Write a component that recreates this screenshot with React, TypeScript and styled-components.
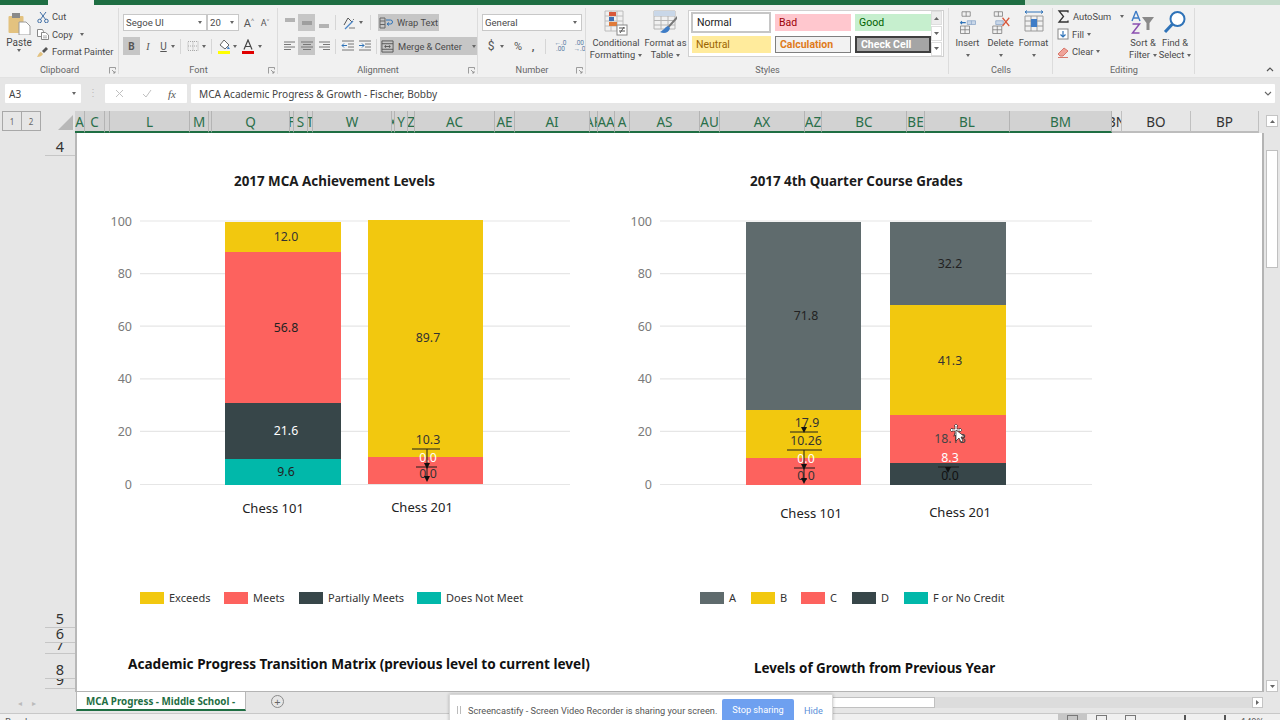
import React from "react";
import styled, { createGlobalStyle } from "styled-components";

const Global = createGlobalStyle`
  html, body { margin: 0; padding: 0; background: #e6e6e6; }
  * { box-sizing: border-box; }
  #root { width: 1280px; height: 720px; overflow: hidden; }
`;

const FONT = `"Noto Sans", "Open Sans", "Liberation Sans", sans-serif`;
const UIFONT = `Roboto, "Noto Sans", "Liberation Sans", sans-serif`;
const GREEN = "#1f6e43";
const YEL = "#f2c80f";
const RED = "#fd625e";
const DARK = "#374649";
const TEAL = "#01b8aa";
const GREY = "#5f6b6d";

const Window = styled.div`
  position: relative;
  width: 1280px;
  height: 720px;
  overflow: hidden;
  display: flex;
  flex-direction: column;
  font-family: ${FONT};
  background: #e6e6e6;
`;

/* ---------- title strip ---------- */
const TitleStrip = styled.div`
  height: 5px;
  flex: none;
  display: flex;
  background: ${GREEN};
`;
const StripGap = styled.div<{ $w: number }>`
  width: ${(p) => p.$w}px;
`;
const StripTab = styled.div`
  width: 46px;
  background: #f1f1f1;
`;
const StripLight = styled.div`
  margin-left: auto;
  width: 255px;
  background: #c5dccc;
`;

/* ---------- ribbon ---------- */
const Ribbon = styled.div`
  height: 73px;
  flex: none;
  display: flex;
  background: #f1f1f1;
  color: #4a4a4a;
  font-family: ${UIFONT};
  font-size: 9.3px;
  border-bottom: 1px solid #e2e2e2;
`;
const Group = styled.div<{ $w: number }>`
  position: relative;
  width: ${(p) => p.$w}px;
  flex: none;
  display: flex;
  flex-direction: column;
  &::after {
    content: "";
    position: absolute;
    right: 0;
    top: 3px;
    bottom: 3px;
    width: 1px;
    background: #dcdcdc;
  }
`;
const GroupBody = styled.div<{ $pl?: number; $pt?: number }>`
  height: 57px;
  flex: none;
  padding: ${(p) => p.$pt ?? 0}px 0 0 ${(p) => p.$pl ?? 0}px;
  display: flex;
`;
const GroupStack = styled.div<{ $pl?: number }>`
  height: 57px;
  flex: none;
  padding: 9px 0 0 ${(p) => p.$pl ?? 0}px;
  display: flex;
  flex-direction: column;
  gap: 6px;
`;
const GroupLabel = styled.div`
  height: 15px;
  line-height: 15px;
  text-align: center;
  font-size: 9.2px;
  color: #666;
`;
const Launcher = styled.svg`
  position: absolute;
  right: 3px;
  bottom: 3px;
  width: 7px;
  height: 7px;
`;
const ToolRow = styled.div<{ $h?: number }>`
  display: flex;
  align-items: center;
  height: ${(p) => p.$h ?? 17}px;
`;
const Tool = styled.div<{ $w?: number; $on?: boolean; $ml?: number }>`
  width: ${(p) => (p.$w ? `${p.$w}px` : "auto")};
  height: 100%;
  margin-left: ${(p) => p.$ml ?? 0}px;
  flex: none;
  display: flex;
  align-items: center;
  justify-content: center;
  gap: 4px;
  background: ${(p) => (p.$on ? "#c6c6c6" : "transparent")};
  color: #4a4a4a;
  white-space: nowrap;
`;
const Caret = styled.span<{ $ml?: number; $mr?: number }>`
  display: inline-block;
  flex: none;
  margin-left: ${(p) => p.$ml ?? 0}px;
  margin-right: ${(p) => p.$mr ?? 0}px;
  border-left: 2.5px solid transparent;
  border-right: 2.5px solid transparent;
  border-top: 3px solid #666;
`;
const Sep = styled.span<{ $ml?: number }>`
  width: 1px;
  height: 15px;
  flex: none;
  margin: 0 ${(p) => p.$ml ?? 4}px;
  background: #d6d6d6;
`;
const PasteCol = styled.div`
  width: 24px;
  margin-left: 7px;
  display: flex;
  flex-direction: column;
  align-items: center;
  padding-top: 7px;
  font-size: 10px;
`;
const PasteLabel = styled.div`
  margin-top: 1px;
  line-height: 13px;
`;
const ClipCol = styled.div`
  margin-left: 6px;
  padding-top: 3px;
  display: flex;
  flex-direction: column;
`;
const ClipRow = styled.div`
  height: 17.5px;
  display: flex;
  align-items: center;
  gap: 3px;
  white-space: nowrap;
`;
const Select = styled.div<{ $w: number }>`
  width: ${(p) => p.$w}px;
  height: 17px;
  flex: none;
  display: flex;
  align-items: center;
  justify-content: space-between;
  padding: 0 4px 0 2px;
  background: #fff;
  border: 1px solid #c8c8c8;
  font-size: 9.6px;
  color: #4a4a4a;
`;
const Glyph = styled.span<{ $w?: number; $b?: boolean; $i?: boolean; $u?: boolean; $s?: number; $f?: string }>`
  display: inline-block;
  text-align: center;
  width: ${(p) => (p.$w ? `${p.$w}px` : "auto")};
  font-weight: ${(p) => (p.$b ? 700 : 400)};
  font-style: ${(p) => (p.$i ? "italic" : "normal")};
  text-decoration: ${(p) => (p.$u ? "underline" : "none")};
  font-size: ${(p) => p.$s ?? 10}px;
  font-family: ${(p) => p.$f ?? "inherit"};
  color: #555;
`;
const DecGlyph = styled.span`
  display: flex;
  flex-direction: column;
  align-items: center;
  font-size: 6.5px;
  line-height: 6.5px;
  color: #5a7da5;
`;
const LargeBtn = styled.div<{ $w: number }>`
  width: ${(p) => p.$w}px;
  flex: none;
  display: flex;
  flex-direction: column;
  align-items: center;
  padding-top: 5px;
  text-align: center;
  line-height: 12px;
`;
const LargeIcon = styled.div`
  height: 26px;
  display: flex;
  align-items: center;
  justify-content: center;
`;
const LargeText = styled.div`
  margin-top: 1px;
  white-space: nowrap;
`;
const CaretLine = styled.div`
  height: 12px;
  display: flex;
  align-items: center;
  justify-content: center;
  gap: 3px;
`;
const Gallery = styled.div`
  margin: 5px 0 0 0;
  width: 256px;
  height: 47px;
  flex: none;
  display: flex;
  background: #fff;
  border: 1px solid #d0d0d0;
`;
const GalleryGrid = styled.div`
  flex: 1;
  display: grid;
  grid-template-columns: 80px 76px 76px;
  grid-template-rows: 21px 17px;
  column-gap: 4px;
  row-gap: 3px;
  padding: 1px 0 0 2px;
`;
const StyleCell = styled.div<{ $bg: string; $c: string; $b?: string; $bold?: boolean; $m?: string }>`
  display: flex;
  align-items: center;
  padding-left: 4px;
  margin: ${(p) => p.$m ?? "0"};
  background: ${(p) => p.$bg};
  color: ${(p) => p.$c};
  border: ${(p) => p.$b ?? "none"};
  font-weight: ${(p) => (p.$bold ? 700 : 400)};
  font-size: 10.5px;
`;
const GalleryScroll = styled.div`
  width: 12px;
  margin: 0 1px 0 0;
  display: flex;
  flex-direction: column;
  gap: 1px;
`;
const GalleryBtn = styled.div<{ $bg?: string }>`
  flex: 1;
  display: flex;
  align-items: center;
  justify-content: center;
  background: ${(p) => p.$bg ?? "#fff"};
  border: 1px solid #dedede;
`;
const Collapse = styled.div`
  flex: 1;
  display: flex;
  align-items: flex-end;
  justify-content: flex-end;
  padding: 0 6px 5px 0;
`;
const EditCol = styled.div`
  margin-left: 4px;
  width: 70px;
  padding-top: 3px;
  display: flex;
  flex-direction: column;
`;

/* ---------- formula bar ---------- */
const FormulaBar = styled.div`
  height: 33px;
  flex: none;
  display: flex;
  align-items: flex-start;
  padding: 6px 5px 0 5px;
  background: #e6e6e6;
`;
const Field = styled.div<{ $w?: number; $ml?: number }>`
  height: 19px;
  width: ${(p) => (p.$w ? `${p.$w}px` : "auto")};
  flex: ${(p) => (p.$w ? "none" : 1)};
  margin-left: ${(p) => p.$ml ?? 0}px;
  background: #fff;
  border-radius: 1px;
  display: flex;
  align-items: center;
  font-size: 10px;
  color: #444;
`;
const NameText = styled.span`
  padding-left: 4px;
  flex: 1;
`;
const FormulaText = styled.span`
  padding-left: 8px;
  flex: 1;
  font-size: 10.1px;
`;
const FxMark = styled.span`
  font-family: "Liberation Serif", serif;
  font-style: italic;
  font-size: 11px;
  color: #555;
`;
const DotsV = styled.div`
  width: 24px;
  height: 19px;
  flex: none;
  text-align: center;
  color: #bbb;
  font-size: 10px;
  line-height: 17px;
`;

/* ---------- column headers ---------- */
const HeaderRow = styled.div`
  height: 22px;
  flex: none;
  display: flex;
  background: #e6e6e6;
`;
const Corner = styled.div`
  width: 75px;
  flex: none;
  display: flex;
  position: relative;
  padding-left: 2px;
`;
const OutlineBtn = styled.div`
  width: 20px;
  height: 20px;
  display: flex;
  align-items: center;
  justify-content: center;
  border: 1px solid #a8a8a8;
  font-size: 8px;
  color: #666;
  margin-right: -1px;
`;
const CornerMark = styled.svg`
  position: absolute;
  left: 58px;
  top: 4px;
  width: 15px;
  height: 15px;
`;
const Col = styled.div<{ $w: number; $sel?: boolean }>`
  width: ${(p) => p.$w}px;
  flex: none;
  height: 22px;
  display: flex;
  align-items: center;
  justify-content: center;
  overflow: hidden;
  white-space: nowrap;
  font-size: 13.5px;
  padding-top: 2px;
  color: ${(p) => (p.$sel ? "#2a6f4a" : "#333")};
  background: ${(p) => (p.$sel ? "#d2d2d2" : "#e6e6e6")};
  border-right: 1px solid ${(p) => (p.$sel ? "#b4b4b4" : "#c0c0c0")};
  border-bottom: 2px solid ${(p) => (p.$sel ? GREEN : "#bdbdbd")};
`;
const ScrollBtn = styled.div<{ $ml?: number; $mt?: number }>`
  width: 12px;
  height: 12px;
  flex: none;
  margin: ${(p) => p.$mt ?? 0}px 0 0 ${(p) => p.$ml ?? 0}px;
  display: flex;
  align-items: center;
  justify-content: center;
  background: #fff;
  border: 1px solid #c4c4c4;
`;

/* ---------- main ---------- */
const Main = styled.div`
  height: 559px;
  flex: none;
  display: flex;
  overflow: hidden;
`;
const Gutter = styled.div`
  width: 75px;
  flex: none;
  display: flex;
  flex-direction: column;
  align-items: flex-end;
`;
const RowHead = styled.div<{ $h: number }>`
  width: 30px;
  height: ${(p) => p.$h}px;
  flex: none;
  overflow: hidden;
  display: flex;
  align-items: flex-end;
  justify-content: center;
  border-bottom: 1px solid #c6c6c6;
  font-size: 14.5px;
  line-height: 18px;
  color: #333;
`;
const Sheet = styled.div`
  width: 1189px;
  flex: none;
  background: #fff;
  border-left: 2px solid #b8b8b8;
  border-right: 2px solid #b4b4b4;
  border-bottom: 1px solid #b4b4b4;
  display: grid;
  grid-template-columns: 523px 512px;
  align-content: start;
  color: #111;
`;
const ChartCard = styled.div`
  display: flex;
  flex-direction: column;
`;
const ChartTitle = styled.div<{ $pl: number }>`
  height: 67px;
  padding: 40px 0 0 ${(p) => p.$pl}px;
  font-weight: 700;
  font-size: 13.4px;
  line-height: 17px;
  color: #1c1c1c;
  white-space: nowrap;
`;
const ChartSvg = styled.svg`
  display: block;
  flex: none;
`;
const AxisText = styled.text`
  font-family: ${FONT};
  font-size: 12.5px;
  fill: #7a7a7a;
  text-anchor: end;
  dominant-baseline: central;
`;
const ValueText = styled.text`
  font-family: ${FONT};
  font-size: 12.3px;
  text-anchor: middle;
  dominant-baseline: central;
`;
const CatText = styled.text`
  font-family: ${FONT};
  font-size: 13px;
  fill: #222;
  text-anchor: middle;
  dominant-baseline: central;
`;
const Legend = styled.div<{ $pl: number }>`
  height: 14px;
  margin-top: 60px;
  padding-left: ${(p) => p.$pl}px;
  display: flex;
  align-items: center;
  font-size: 11px;
  color: #333;
  white-space: nowrap;
`;
const LegendItem = styled.div<{ $w: number }>`
  width: ${(p) => p.$w}px;
  flex: none;
  display: flex;
  align-items: center;
  gap: 5px;
`;
const Swatch = styled.span<{ $c: string }>`
  width: 24px;
  height: 12px;
  flex: none;
  margin-top: 2px;
  background: ${(p) => p.$c};
`;
const Heading = styled.div<{ $pl: number; $mt: number; $s: number }>`
  margin-top: ${(p) => p.$mt}px;
  padding-left: ${(p) => p.$pl}px;
  font-weight: 700;
  font-size: ${(p) => p.$s}px;
  line-height: 18px;
  color: #111;
  white-space: nowrap;
`;
const VScroll = styled.div`
  flex: 1;
  display: flex;
  flex-direction: column;
  align-items: center;
  padding: 17px 0 0 0;
  background: #e6e6e6;
`;
const VThumb = styled.div`
  width: 12px;
  height: 118px;
  flex: none;
  background: #fff;
  border: 1px solid #c0c0c0;
`;
const VTrack = styled.div`
  flex: 1;
`;

/* ---------- bottom ---------- */
const TabBar = styled.div`
  height: 21px;
  flex: none;
  display: flex;
  background: #e6e6e6;
`;
const SheetNav = styled.div`
  width: 76px;
  flex: none;
  display: flex;
  align-items: center;
  gap: 10px;
  padding-left: 18px;
  color: #bbb;
  font-size: 8px;
`;
const SheetTab = styled.div`
  width: 170px;
  flex: none;
  height: 19px;
  padding: 1px 0 0 9px;
  display: flex;
  align-items: center;
  background: #fff;
  border-left: 1px solid #b8b8b8;
  border-right: 1px solid #b8b8b8;
  border-bottom: 2px solid ${GREEN};
  color: ${GREEN};
  font-weight: 700;
  font-size: 9.8px;
  white-space: nowrap;
`;
const AddSheet = styled.div`
  width: 13px;
  height: 13px;
  margin: 3px 0 0 25px;
  flex: none;
  display: flex;
  align-items: center;
  justify-content: center;
  border: 1px solid #8a8a8a;
  border-radius: 50%;
  color: #666;
  font-size: 11px;
  line-height: 11px;
`;
const HScroll = styled.div`
  flex: none;
  margin: 5px 0 0 auto;
  height: 11px;
  display: flex;
  width: 664px;
  background: #dcdcdc;
`;
const HThumb = styled.div`
  width: 336px;
  flex: none;
  background: #fff;
  border: 1px solid #c0c0c0;
`;
const HTrackEnd = styled.div`
  flex: 1;
`;
const HBtn = styled.div`
  width: 11px;
  flex: none;
  display: flex;
  align-items: center;
  justify-content: center;
  background: #fff;
  border: 1px solid #c4c4c4;
`;
const TabEndGap = styled.div`
  width: 17px;
  flex: none;
`;
const StatusBar = styled.div`
  flex: 1;
  display: flex;
  align-items: flex-start;
  background: #f0f0f0;
  border-top: 1px solid #c8c8c8;
  overflow: hidden;
  font-size: 9.5px;
  color: #555;
`;
const ReadyText = styled.div`
  padding: 1px 0 0 5px;
  width: 1058px;
  flex: none;
`;
const ViewBtn = styled.div<{ $on?: boolean }>`
  width: 29px;
  height: 8px;
  flex: none;
  display: flex;
  justify-content: center;
  padding-top: 1px;
  background: ${(p) => (p.$on ? "#c6c6c6" : "transparent")};
`;
const ViewBox = styled.span`
  width: 11px;
  height: 10px;
  border: 1px solid #777;
`;
const ZoomArea = styled.div`
  flex: 1;
  display: flex;
  padding-top: 1px;
`;
const ZoomTick = styled.span<{ $ml: number }>`
  width: 2px;
  height: 8px;
  margin-left: ${(p) => p.$ml}px;
  background: #555;
`;
const ZoomText = styled.span`
  margin-left: 15px;
  font-size: 9px;
`;
const Share = styled.div`
  position: absolute;
  left: 449px;
  top: 694px;
  width: 384px;
  height: 30px;
  display: flex;
  align-items: flex-start;
  background: #fff;
  border: 1px solid #d8d8d8;
  box-shadow: 0 0 3px rgba(0, 0, 0, 0.25);
  font-family: ${UIFONT};
  font-size: 9.2px;
  color: #555;
  white-space: nowrap;
`;
const ShareGrip = styled.span`
  margin: 11px 0 0 7px;
  width: 4px;
  height: 8px;
  flex: none;
  border-left: 1px solid #bbb;
  border-right: 1px solid #bbb;
`;
const ShareText = styled.span`
  margin: 10px 0 0 7px;
  width: 254px;
  flex: none;
`;
const StopBtn = styled.div`
  width: 72px;
  height: 26px;
  margin-top: 4px;
  flex: none;
  padding-top: 5px;
  text-align: center;
  background: #6ea0f0;
  color: #fff;
  border-radius: 2px 2px 0 0;
`;
const HideLink = styled.span`
  margin: 10px 0 0 10px;
  color: #5b8fd8;
`;

/* ---------- icons ---------- */
type IP = { w: number; h?: number; children: React.ReactNode; vb?: string };
const I = ({ w, h, children, vb }: IP) => (
  <svg width={w} height={h ?? w} viewBox={vb ?? `0 0 ${w} ${h ?? w}`} fill="none" style={{ flex: "none" }}>
    {children}
  </svg>
);
const LauncherIcon = () => (
  <Launcher viewBox="0 0 7 7" fill="none">
    <path d="M.5 6.5v-6h6v2M3 3l3 3M6 4v2H4" stroke="#888" strokeWidth="0.8" />
  </Launcher>
);
const PasteIcon = () => (
  <I w={23} h={23}>
    <rect x="0.5" y="4" width="15" height="17" rx="1" fill="#e3c27f" />
    <rect x="4" y="1" width="8" height="5" fill="#8a8a8a" />
    <path d="M11 10h7l4 4v9H11z" fill="#fff" stroke="#9a9a9a" />
  </I>
);
const ScissorsIcon = () => (
  <I w={12}>
    <path d="M3 1l6 8M9 1L3 9" stroke="#3f6ea5" strokeWidth="1" />
    <circle cx="2.6" cy="10" r="1.8" stroke="#3f6ea5" />
    <circle cx="9.4" cy="10" r="1.8" stroke="#3f6ea5" />
  </I>
);
const CopyIcon = () => (
  <I w={12}>
    <path d="M.5 1.5h5l1 2v5h-6z" fill="#fff" stroke="#888" />
    <path d="M4.5 4.5h4l3 2.5v4.5h-7z" fill="#fff" stroke="#888" />
    <path d="M6 8h4M6 9.8h4" stroke="#aaa" />
  </I>
);
const BrushIcon = () => (
  <I w={12}>
    <path d="M0 11c2-4 3-5 4-5l2 2c-1 2-3 3-6 3z" fill="#e3c27f" />
    <path d="M5 5l4-4 2 2-4 4z" fill="#555" />
  </I>
);
const Lines = ({ rows }: { rows: [number, number, number][] }) => (
  <I w={14}>
    {rows.map(([x1, x2, y], i) => (
      <path key={i} d={`M${x1} ${y}H${x2}`} stroke="#777" />
    ))}
  </I>
);
const BordersIcon = () => (
  <I w={12}>
    <path d="M1 1.5h10v9H1zM6 1.5v9M1 6h10" stroke="#aaa" strokeDasharray="1 1" />
  </I>
);
const FillIcon = () => (
  <I w={14} h={15}>
    <path d="M7 1l5 5-4 4-5-4z" fill="#fff" stroke="#666" />
    <path d="M11 7l2 3H10z" fill="#4d86c6" />
    <rect x="1" y="12" width="12" height="3" fill="#ffff00" />
  </I>
);
const FontColorIcon = () => (
  <I w={14} h={15}>
    <path d="M3 10.5L7 1l4 9.5M4.6 7.5h4.8" stroke="#444" strokeWidth="1.2" />
    <rect x="1" y="12" width="12" height="3" fill="#e00000" />
  </I>
);
const OrientIcon = () => (
  <I w={14}>
    <path d="M2 9l4-7 4 4" stroke="#555" />
    <path d="M3 13l8-8" stroke="#4d86c6" strokeWidth="1.2" />
    <path d="M11 4l1-1M7 12h6" stroke="#777" />
  </I>
);
const IndentIcon = ({ dir }: { dir: number }) => (
  <I w={14}>
    <path d="M1 2h12M7 5h6M7 8h6M1 11h12" stroke="#777" />
    <path d={dir < 0 ? "M1 6.5h5M3 4.5l-2 2 2 2" : "M1 6.5h5M4 4.5l2 2-2 2"} stroke="#2f73b8" />
  </I>
);
const WrapIcon = () => (
  <I w={14}>
    <path d="M1 2h5v10H1zM1 5h5M1 8.5h5" stroke="#666" />
    <path d="M7 4h4.5a1.5 1.5 0 010 4H8.5M10 6.5L8 8l2 1.5" stroke="#2f73b8" />
  </I>
);
const MergeIcon = () => (
  <I w={13} vb="0 0 14 14">
    <path d="M1 1h12v12H1zM1 4h12M1 10h12M4 7h6M4 7l1.5-1.4M4 7l1.5 1.4M10 7L8.5 5.6M10 7L8.5 8.4" stroke="#555" />
  </I>
);
const CondIcon = () => (
  <I w={24} h={26}>
    <path d="M1 1h18v20H1zM1 6h18M1 11h18M1 16h18M7 1v20M13 1v20" stroke="#bcbcbc" />
    <rect x="5" y="2" width="7" height="4" fill="#d8583b" />
    <rect x="5" y="7" width="5" height="4" fill="#3e6fb3" />
    <rect x="5" y="12" width="8" height="4" fill="#e07b3a" />
    <rect x="13" y="15" width="10" height="10" fill="#fff" stroke="#888" />
    <path d="M15 18h6M15 21h6M20 17l-4 6" stroke="#555" />
  </I>
);
const TableFmtIcon = () => (
  <I w={26} h={26}>
    <path d="M1 1h21v18H1zM1 6h21M1 10.5h21M1 15h21M8 1v18M15 1v18" stroke="#b4b4b4" />
    <rect x="1" y="1" width="21" height="5" fill="#c9d7e8" />
    <path d="M24 6l-9 10c-2 2-1 3 0 3l9-10z" fill="#777" />
    <path d="M15 16c-3 1-4 4-8 6 4 2 9 1 10-4z" fill="#3e7cc6" />
  </I>
);
const CellGrid = () => <path d="M3 1h11v6H3zM8.5 1v6M1 20h12v10H1zM7 20v10M1 25h12" stroke="#777" />;
const InsertIcon = () => (
  <I w={22} h={24} vb="0 0 22 32">
    <CellGrid />
    <path d="M10 13h11v5H10zM15.5 13v5" stroke="#8aa5c8" fill="#c9d7e8" />
    <path d="M1 15.5h7M3 13.5l-2 2 2 2" stroke="#2f73b8" strokeWidth="1.4" />
  </I>
);
const DeleteIcon = () => (
  <I w={24} vb="0 0 24 32" h={24}>
    <CellGrid />
    <path d="M5 13h10v5H5z" fill="#c9d7e8" stroke="#8aa5c8" />
    <path d="M14 9l9 11M23 9l-9 11" stroke="#d8583b" strokeWidth="1.6" />
  </I>
);
const FormatIcon = () => (
  <I w={22} h={26}>
    <path d="M2 6h18v15H2zM8 6v15M14 6v15M2 11h18M2 16h18" stroke="#9a9a9a" />
    <rect x="8" y="9" width="6" height="8" fill="#3e7cc6" />
    <path d="M2 2h18M2 2l2-1.5M2 2l2 1.5M20 2l-2-1.5M20 2l-2 1.5" stroke="#2f73b8" />
  </I>
);
const SigmaIcon = () => (
  <I w={13}>
    <path d="M11 2.5V1H2l4.5 5.5L2 12h9v-1.5" stroke="#333" strokeWidth="1.3" />
  </I>
);
const FillDownIcon = () => (
  <I w={12}>
    <rect x="1" y="1" width="10" height="10" fill="#fff" stroke="#888" />
    <path d="M6 3v6M3.5 6.5L6 9l2.5-2.5" stroke="#2f73b8" strokeWidth="1.2" />
  </I>
);
const EraserIcon = () => (
  <I w={12}>
    <path d="M1 8l6-6 4 3-5 5H3z" fill="#f0a49a" stroke="#d8786c" />
    <path d="M1 11.5h10" stroke="#d8786c" />
  </I>
);
const SortIcon = () => (
  <I w={24} h={26}>
    <path d="M5 1L1 11M5 1l4 10M2.5 8h5" stroke="#3e7cc6" strokeWidth="1.4" />
    <path d="M1.5 14h7l-7 9h7" stroke="#8b4fb0" strokeWidth="1.5" />
    <path d="M11 7h12l-4.5 6v7h-3v-7z" fill="#8a8a8a" />
  </I>
);
const FindIcon = () => (
  <I w={24} h={26}>
    <circle cx="14.5" cy="9" r="7" stroke="#2f73b8" strokeWidth="2" fill="#fff" />
    <path d="M9.5 14L2 22" stroke="#2f73b8" strokeWidth="3" />
  </I>
);
const Tri = ({ d }: { d: "up" | "down" | "right" }) => (
  <I w={7}>
    <path d={d === "up" ? "M1 5h5L3.5 2z" : d === "down" ? "M1 2h5L3.5 5z" : "M2 1v5l3-2.5z"} fill="#666" />
  </I>
);

/* ---------- data ---------- */
const cols: [string, number, boolean?][] = [
  ["A", 10, true], ["C", 20, true], ["", 5, true], ["L", 80, true], ["M", 19, true], ["", 3, true], ["Q", 78, true],
  ["F", 4, true], ["S", 14, true], ["T", 5, true], ["W", 79, true], ["X", 3, true], ["Y", 13, true], ["Z", 7, true],
  ["AC", 80, true], ["AE", 20, true], ["AI", 75, true], ["AK", 8, true], ["AA", 17, true], ["A", 15, true],
  ["AS", 70, true], ["AU", 20, true], ["AX", 85, true], ["AZ", 17, true], ["BC", 85, true], ["BE", 18, true],
  ["BL", 85, true], ["BM", 102, true], ["BN", 10], ["BO", 69], ["BP", 68],
];
type Seg = [number, number, string];
type Lab = [number, number, string, string];
type Line = [number, number, number, number];
type ChartDef = {
  x: number;
  w: number;
  gridX: [number, number];
  axisX: number;
  bars: { x: number; w: number; segs: Seg[] }[];
  labels: Lab[];
  lines: Line[];
  arrows: [number, number][];
  cats: [number, number, string][];
};
const chart1: ChartDef = {
  x: 77,
  w: 523,
  gridX: [140, 570],
  axisX: 132,
  bars: [
    { x: 225, w: 116, segs: [[222, 252, YEL], [252, 403, RED], [403, 459, DARK], [459, 485, TEAL]] },
    { x: 368, w: 115, segs: [[220, 457, YEL], [457, 484, RED]] },
  ],
  labels: [
    [286, 236, "12.0", "#333"], [286, 327, "56.8", "#222"], [286, 430, "21.6", "#fff"], [286, 471, "9.6", "#222"],
    [428, 337, "89.7", "#333"], [428, 439, "10.3", "#333"], [428, 457, "0.0", "#fff"], [428, 473, "0.0", "#333"],
  ],
  lines: [[412, 449, 440, 449], [427, 449, 427, 464], [416, 467, 437, 467], [427, 467, 427, 477]],
  arrows: [[427, 463], [427, 476]],
  cats: [[273, 508, "Chess 101"], [422, 507, "Chess 201"]],
};
const chart2: ChartDef = {
  x: 600,
  w: 512,
  gridX: [660, 1092],
  axisX: 652,
  bars: [
    { x: 746, w: 115, segs: [[222, 410, GREY], [410, 458, YEL], [458, 485, RED]] },
    { x: 890, w: 116, segs: [[222, 305, GREY], [305, 415, YEL], [415, 463, RED], [463, 485, DARK]] },
  ],
  labels: [
    [806, 315, "71.8", "#222"], [950, 263, "32.2", "#222"], [950, 360, "41.3", "#333"], [807, 422, "17.9", "#333"],
    [806, 440, "10.26", "#333"], [806, 458, "0.0", "#fff"], [806, 475, "0.0", "#333"], [950, 438, "18.18", "#444"],
    [950, 457, "8.3", "#fff"], [950, 475, "0.0", "#111"],
  ],
  lines: [
    [790, 432, 818, 432], [787, 450, 822, 450], [804, 450, 804, 465], [794, 468, 815, 468], [804, 468, 804, 479], [938, 467, 959, 467],
  ],
  arrows: [[804, 427], [804, 464], [804, 478], [948, 467]],
  cats: [[811, 513, "Chess 101"], [960, 512, "Chess 201"]],
};

const Chart = ({ def, children }: { def: ChartDef; children?: React.ReactNode }) => (
  <ChartSvg width={def.w} height={330} viewBox={`${def.x} 200 ${def.w} 330`}>
    {[221, 273.6, 326.2, 378.8, 431.4, 484.5].map((y, i) => (
      <g key={y}>
        <path d={`M${def.gridX[0]} ${y}H${def.gridX[1]}`} stroke="#e6e6e6" strokeWidth="1.2" />
        <AxisText x={def.axisX} y={y}>{100 - i * 20}</AxisText>
      </g>
    ))}
    {def.bars.map((b) =>
      b.segs.map(([y1, y2, fill]) => <rect key={`${b.x}-${y1}`} x={b.x} y={y1} width={b.w} height={y2 - y1} fill={fill} />),
    )}
    {def.labels.map(([x, y, t, c]) => (
      <ValueText key={`${x}-${y}`} x={x} y={y} fill={c}>{t}</ValueText>
    ))}
    {def.lines.map(([a, b, c, d]) => (
      <path key={`${a}-${b}-${c}`} d={`M${a} ${b}L${c} ${d}`} stroke="#1c1c1c" strokeWidth="1" />
    ))}
    {def.arrows.map(([x, y]) => (
      <path key={`${x}-${y}`} d={`M${x - 3} ${y}h6l-3 6z`} fill="#111" />
    ))}
    {def.cats.map(([x, y, t]) => (
      <CatText key={t} x={x} y={y}>{t}</CatText>
    ))}
    {children}
  </ChartSvg>
);

export default function App() {
  return (
    <Window>
      <Global />
      <TitleStrip>
        <StripGap $w={48} />
        <StripTab />
        <StripLight />
      </TitleStrip>

      <Ribbon>
        <Group $w={119}>
          <GroupBody>
            <PasteCol>
              <PasteIcon />
              <PasteLabel>Paste</PasteLabel>
              <Caret />
            </PasteCol>
            <ClipCol>
              <ClipRow><ScissorsIcon />Cut</ClipRow>
              <ClipRow><CopyIcon />Copy<Caret $ml={4} /></ClipRow>
              <ClipRow><BrushIcon />Format Painter</ClipRow>
            </ClipCol>
          </GroupBody>
          <GroupLabel>Clipboard</GroupLabel>
          <LauncherIcon />
        </Group>

        <Group $w={159}>
          <GroupStack $pl={4}>
            <ToolRow>
              <Select $w={84}>Segoe UI<Caret /></Select>
              <Select $w={32}>20<Caret /></Select>
              <Tool $w={16} $ml={2}><Glyph $s={11}>A˄</Glyph></Tool>
              <Tool $w={16}><Glyph $s={9}>A˅</Glyph></Tool>
            </ToolRow>
            <ToolRow $h={18}>
              <Tool $w={17} $on><Glyph $b>B</Glyph></Tool>
              <Tool $w={16}><Glyph $i $f={'"Liberation Serif", serif'}>I</Glyph></Tool>
              <Tool $w={15}><Glyph $u>U</Glyph></Tool>
              <Caret />
              <Sep $ml={5} />
              <Tool $w={14}><BordersIcon /></Tool>
              <Caret $ml={2} />
              <Sep $ml={5} />
              <Tool><FillIcon /></Tool>
              <Caret $ml={2} />
              <Tool $ml={4}><FontColorIcon /></Tool>
              <Caret $ml={3} />
            </ToolRow>
          </GroupStack>
          <GroupLabel>Font</GroupLabel>
          <LauncherIcon />
        </Group>

        <Group $w={200}>
          <GroupStack $pl={4}>
            <ToolRow>
              <Tool $w={16}><Lines rows={[[2, 12, 3], [2, 12, 5]]} /></Tool>
              <Tool $w={17} $on><Lines rows={[[2, 12, 6], [2, 12, 8]]} /></Tool>
              <Tool $w={17}><Lines rows={[[2, 12, 9], [2, 12, 11]]} /></Tool>
              <Sep $ml={3} />
              <Tool $w={20}><OrientIcon /></Tool>
              <Caret />
              <Sep $ml={7} />
              <Tool $w={61} $on><WrapIcon />Wrap Text</Tool>
            </ToolRow>
            <ToolRow $h={18}>
              <Tool $w={16}><Lines rows={[[1, 12, 3], [1, 8, 5.5], [1, 12, 8], [1, 8, 10.5]]} /></Tool>
              <Tool $w={17} $on><Lines rows={[[1, 13, 3], [3, 11, 5.5], [1, 13, 8], [3, 11, 10.5]]} /></Tool>
              <Tool $w={17}><Lines rows={[[2, 13, 3], [6, 13, 5.5], [2, 13, 8], [6, 13, 10.5]]} /></Tool>
              <Sep $ml={3} />
              <Tool $w={17}><IndentIcon dir={-1} /></Tool>
              <Tool $w={17}><IndentIcon dir={1} /></Tool>
              <Sep $ml={3} />
              <Tool $w={97} $on><MergeIcon />Merge &amp; Center<Caret $ml={6} /></Tool>
            </ToolRow>
          </GroupStack>
          <GroupLabel>Alignment</GroupLabel>
          <LauncherIcon />
        </Group>

        <Group $w={108}>
          <GroupStack $pl={4}>
            <ToolRow><Select $w={100}>General<Caret /></Select></ToolRow>
            <ToolRow $h={18}>
              <Tool $w={18}><Glyph $s={12}>$</Glyph></Tool>
              <Caret />
              <Tool $w={18} $ml={5}><Glyph $s={11}>%</Glyph></Tool>
              <Tool $w={12}><Glyph $b $s={11}>,</Glyph></Tool>
              <Sep $ml={6} />
              <Tool $w={17}><DecGlyph><span>←.0</span><span>.00</span></DecGlyph></Tool>
              <Tool $w={17} $ml={2}><DecGlyph><span>.00</span><span>→.0</span></DecGlyph></Tool>
            </ToolRow>
          </GroupStack>
          <GroupLabel>Number</GroupLabel>
          <LauncherIcon />
        </Group>

        <Group $w={363}>
          <GroupBody $pl={3}>
            <LargeBtn $w={54}>
              <LargeIcon><CondIcon /></LargeIcon>
              <LargeText>Conditional</LargeText>
              <CaretLine>Formatting<Caret /></CaretLine>
            </LargeBtn>
            <LargeBtn $w={45}>
              <LargeIcon><TableFmtIcon /></LargeIcon>
              <LargeText>Format as</LargeText>
              <CaretLine>Table<Caret /></CaretLine>
            </LargeBtn>
            <Gallery>
              <GalleryGrid>
                <StyleCell $bg="#fff" $c="#222" $b="2px solid #c6c6c6">Normal</StyleCell>
                <StyleCell $bg="#ffc7ce" $c="#9c0006" $m="2px 0">Bad</StyleCell>
                <StyleCell $bg="#c6efce" $c="#006100" $m="2px 0">Good</StyleCell>
                <StyleCell $bg="#ffeb9c" $c="#9c6500" $m="0 0 0 1px">Neutral</StyleCell>
                <StyleCell $bg="#f2f2f2" $c="#e07b1a" $b="1px solid #7f7f7f" $bold>Calculation</StyleCell>
                <StyleCell $bg="#a5a5a5" $c="#fff" $b="2px solid #3f3f3f" $bold>Check Cell</StyleCell>
              </GalleryGrid>
              <GalleryScroll>
                <GalleryBtn $bg="#ececec"><Tri d="up" /></GalleryBtn>
                <GalleryBtn><Tri d="down" /></GalleryBtn>
                <GalleryBtn><Tri d="down" /></GalleryBtn>
              </GalleryScroll>
            </Gallery>
          </GroupBody>
          <GroupLabel>Styles</GroupLabel>
        </Group>

        <Group $w={104}>
          <GroupBody $pl={2}>
            <LargeBtn $w={33}>
              <LargeIcon><InsertIcon /></LargeIcon>
              <LargeText>Insert</LargeText>
              <CaretLine><Caret /></CaretLine>
            </LargeBtn>
            <LargeBtn $w={33}>
              <LargeIcon><DeleteIcon /></LargeIcon>
              <LargeText>Delete</LargeText>
              <CaretLine><Caret /></CaretLine>
            </LargeBtn>
            <LargeBtn $w={33}>
              <LargeIcon><FormatIcon /></LargeIcon>
              <LargeText>Format</LargeText>
              <CaretLine><Caret /></CaretLine>
            </LargeBtn>
          </GroupBody>
          <GroupLabel>Cells</GroupLabel>
        </Group>

        <Group $w={142}>
          <GroupBody>
            <EditCol>
              <ClipRow><SigmaIcon />AutoSum<Caret $ml={6} /></ClipRow>
              <ClipRow><FillDownIcon />Fill<Caret /></ClipRow>
              <ClipRow><EraserIcon />Clear<Caret /></ClipRow>
            </EditCol>
            <LargeBtn $w={32}>
              <LargeIcon><SortIcon /></LargeIcon>
              <LargeText>Sort &amp;</LargeText>
              <CaretLine>Filter<Caret /></CaretLine>
            </LargeBtn>
            <LargeBtn $w={32}>
              <LargeIcon><FindIcon /></LargeIcon>
              <LargeText>Find &amp;</LargeText>
              <CaretLine>Select<Caret /></CaretLine>
            </LargeBtn>
          </GroupBody>
          <GroupLabel>Editing</GroupLabel>
        </Group>

        <Collapse>
          <I w={8} h={6}><path d="M1 5l3-3 3 3" stroke="#555" strokeWidth="1.2" /></I>
        </Collapse>
      </Ribbon>

      <FormulaBar>
        <Field $w={76}><NameText>A3</NameText><Caret $mr={5} /></Field>
        <DotsV>⋮</DotsV>
        <Field $w={82}>
          <Tool $w={28}><I w={9}><path d="M1 1l7 7M8 1L1 8" stroke="#c0c0c0" /></I></Tool>
          <Tool $w={28}><I w={10}><path d="M1 5l3 3 5-7" stroke="#c0c0c0" /></I></Tool>
          <Tool $w={22}><FxMark>fx</FxMark></Tool>
        </Field>
        <Field $ml={4}>
          <FormulaText>MCA Academic Progress &amp; Growth - Fischer, Bobby</FormulaText>
          <Tool $w={14}><I w={8} h={6}><path d="M1 1l3 3 3-3" stroke="#666" strokeWidth="1.1" /></I></Tool>
        </Field>
      </FormulaBar>

      <HeaderRow>
        <Corner>
          <OutlineBtn>1</OutlineBtn>
          <OutlineBtn>2</OutlineBtn>
          <CornerMark viewBox="0 0 15 15"><path d="M15 0v15H0z" fill="#b8b8b8" /></CornerMark>
        </Corner>
        {cols.map(([t, w, sel], i) => (
          <Col key={i} $w={w} $sel={sel}>{t}</Col>
        ))}
        <ScrollBtn $ml={7} $mt={4}><Tri d="up" /></ScrollBtn>
      </HeaderRow>

      <Main>
        <Gutter>
          <RowHead $h={23}>4</RowHead>
          <RowHead $h={472}>5</RowHead>
          <RowHead $h={15}>6</RowHead>
          <RowHead $h={11}>7</RowHead>
          <RowHead $h={25}>8</RowHead>
          <RowHead $h={10}>9</RowHead>
        </Gutter>
        <Sheet>
          <ChartCard>
            <ChartTitle $pl={157}>2017 MCA Achievement Levels</ChartTitle>
            <Chart def={chart1} />
            <Legend $pl={63}>
              <LegendItem $w={84}><Swatch $c={YEL} />Exceeds</LegendItem>
              <LegendItem $w={75}><Swatch $c={RED} />Meets</LegendItem>
              <LegendItem $w={118}><Swatch $c={DARK} />Partially Meets</LegendItem>
              <LegendItem $w={110}><Swatch $c={TEAL} />Does Not Meet</LegendItem>
            </Legend>
            <Heading $pl={51} $mt={51} $s={13.6}>Academic Progress Transition Matrix (previous level to current level)</Heading>
          </ChartCard>
          <ChartCard>
            <ChartTitle $pl={150}>2017 4th Quarter Course Grades</ChartTitle>
            <Chart def={chart2}>
              <g transform="translate(950 424)">
                <path d="M6 0l2 2H7v3h3V4l2 2-2 2V7H7v3h1l-2 2-2-2h1V7H2v1L0 6l2-2v1h3V2H4z" fill="#fff" stroke="#222" strokeWidth="0.6" />
                <path d="M6 6v11l3-3 2 4 2-1-2-4h4z" fill="#fff" stroke="#222" strokeWidth="0.7" />
              </g>
            </Chart>
            <Legend $pl={100}>
              <LegendItem $w={51}><Swatch $c={GREY} />A</LegendItem>
              <LegendItem $w={50}><Swatch $c={YEL} />B</LegendItem>
              <LegendItem $w={51}><Swatch $c={RED} />C</LegendItem>
              <LegendItem $w={52}><Swatch $c={DARK} />D</LegendItem>
              <LegendItem $w={110}><Swatch $c={TEAL} />F or No Credit</LegendItem>
            </Legend>
            <Heading $pl={154} $mt={55} $s={13.4}>Levels of Growth from Previous Year</Heading>
          </ChartCard>
        </Sheet>
        <VScroll>
          <VThumb />
          <VTrack />
          <ScrollBtn><Tri d="down" /></ScrollBtn>
        </VScroll>
      </Main>

      <TabBar>
        <SheetNav><span>◂</span><span>▸</span></SheetNav>
        <SheetTab>MCA Progress - Middle School -</SheetTab>
        <AddSheet>+</AddSheet>
        <HScroll>
          <HThumb />
          <HTrackEnd />
          <HBtn><Tri d="right" /></HBtn>
        </HScroll>
        <TabEndGap />
      </TabBar>
      <StatusBar>
        <ReadyText>Ready</ReadyText>
        <ViewBtn $on><ViewBox /></ViewBtn>
        <ViewBtn><ViewBox /></ViewBtn>
        <ViewBtn><ViewBox /></ViewBtn>
        <ZoomArea>
          <ZoomTick $ml={39} />
          <ZoomTick $ml={38} />
          <ZoomText>140%</ZoomText>
        </ZoomArea>
      </StatusBar>

      <Share>
        <ShareGrip />
        <ShareText>Screencastify - Screen Video Recorder is sharing your screen.</ShareText>
        <StopBtn>Stop sharing</StopBtn>
        <HideLink>Hide</HideLink>
      </Share>
    </Window>
  );
}
